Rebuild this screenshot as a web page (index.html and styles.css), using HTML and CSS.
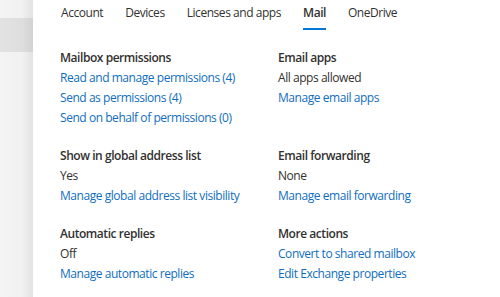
FILE: index.html
```html
<!DOCTYPE html>
<html lang="en">
<head>
  <meta charset="UTF-8">
  <title>User details - Mail</title>
  <link rel="stylesheet" href="styles.css">
</head>
<body>
  <div class="backdrop">
    <div class="row-top"></div>
    <div class="row-selected"></div>
  </div>

  <div class="panel">
    <nav class="tabs">
      <a href="#">Account</a>
      <a href="#">Devices</a>
      <a href="#">Licenses and apps</a>
      <a href="#" class="active">Mail</a>
      <a href="#">OneDrive</a>
    </nav>

    <div class="sections">
      <div class="section">
        <h3>Mailbox permissions</h3>
        <a href="#">Read and manage permissions (4)</a>
        <a href="#">Send as permissions (4)</a>
        <a href="#">Send on behalf of permissions (0)</a>
      </div>
      <div class="section">
        <h3>Email apps</h3>
        <p>All apps allowed</p>
        <a href="#">Manage email apps</a>
      </div>

      <div class="section">
        <h3>Show in global address list</h3>
        <p>Yes</p>
        <a href="#">Manage global address list visibility</a>
      </div>
      <div class="section">
        <h3>Email forwarding</h3>
        <p>None</p>
        <a href="#">Manage email forwarding</a>
      </div>

      <div class="section">
        <h3>Automatic replies</h3>
        <p>Off</p>
        <a href="#">Manage automatic replies</a>
      </div>
      <div class="section">
        <h3>More actions</h3>
        <a href="#">Convert to shared mailbox</a>
        <a href="#">Edit Exchange properties</a>
      </div>
    </div>
  </div>
</body>
</html>
```

FILE: styles.css
```css
body {
  margin: 0;
  font-family: "Open Sans", "Liberation Sans", sans-serif;
  font-size: 12px;
  color: #323130;
  background: #fff;
  display: flex;
  height: 297px;
  overflow: hidden;
  letter-spacing: -0.45px;
}
.backdrop {
  width: 33px;
  flex-shrink: 0;
  background: linear-gradient(to right, #f4f4f4 0, #f1f1f1 22px, #e2e2e2 33px);
}
.row-top {
  height: 18px;
}
.row-selected {
  height: 34px;
  background: linear-gradient(to right, #e2e2e2 0, #dedede 22px, #d2d2d2 33px);
}
.panel {
  flex: 1;
  padding-left: 27px;
}
.tabs {
  display: flex;
  gap: 22px;
  height: 31px;
  align-items: flex-start;
}
.tabs a {
  color: #323130;
  text-decoration: none;
  line-height: 17px;
  padding-top: 4px;
  padding-bottom: 7px;
  border-bottom: 2px solid transparent;
}
.tabs a:first-child {
  margin-left: 1px;
}
.tabs a.active {
  font-weight: 600;
  border-bottom-color: #0078d4;
}
.sections {
  display: grid;
  grid-template-columns: 218px 1fr;
  row-gap: 18px;
  padding-top: 17px;
}
.section {
  display: flex;
  flex-direction: column;
  align-items: flex-start;
}
.section h3 {
  margin: 0;
  font-size: 12px;
  font-weight: 600;
  line-height: 20px;
}
.section p {
  margin: 0;
  line-height: 20px;
}
.section a {
  color: #106ebe;
  text-decoration: none;
  line-height: 20px;
}
```
